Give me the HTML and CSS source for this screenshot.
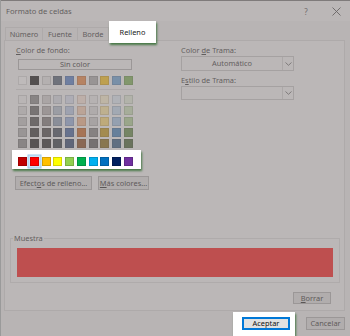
FILE: index.html
```html
<!DOCTYPE html>
<html lang="es">
<head>
<meta charset="utf-8">
<title>Formato de celdas</title>
<link rel="stylesheet" href="styles.css">
</head>
<body>
<div class="dialog">
  <header class="titlebar">
    <span class="title">Formato de celdas</span>
    <span class="help">?</span>
    <span class="close"><svg width="9" height="9" viewBox="0 0 9 9"><path d="M0.5 0.5L8.5 8.5M8.5 0.5L0.5 8.5" stroke="#333" stroke-width="0.9" fill="none"/></svg></span>
  </header>
  <div class="main">
    <nav class="tabs">
      <div class="tab t1">Número</div>
      <div class="tab t2">Fuente</div>
      <div class="tab t3">Borde</div>
      <div class="tab active hl">Relleno</div>
    </nav>
    <section class="panel">
      <div class="cols">
        <div class="left">
          <div class="label"><u>C</u>olor de fondo:</div>
          <button class="btn nocolor">Sin color</button>
          <div class="swrow theme">
            <span class="sw" style="background:#ffffff"></span>
            <span class="sw" style="background:#000000"></span>
            <span class="sw" style="background:#e7e6e6"></span>
            <span class="sw" style="background:#44546a"></span>
            <span class="sw" style="background:#4472c4"></span>
            <span class="sw" style="background:#ed7d31"></span>
            <span class="sw" style="background:#a5a5a5"></span>
            <span class="sw" style="background:#ffc000"></span>
            <span class="sw" style="background:#5b9bd5"></span>
            <span class="sw" style="background:#70ad47"></span>
          </div>
          <div class="sep"></div>
          <div class="grid">
            <div class="swrow">
              <span class="sw" style="background:#f2f2f2"></span>
              <span class="sw" style="background:#7f7f7f"></span>
              <span class="sw" style="background:#d0cece"></span>
              <span class="sw" style="background:#d6dce4"></span>
              <span class="sw" style="background:#d9e1f2"></span>
              <span class="sw" style="background:#fce4d6"></span>
              <span class="sw" style="background:#ededed"></span>
              <span class="sw" style="background:#fff2cc"></span>
              <span class="sw" style="background:#ddebf7"></span>
              <span class="sw" style="background:#e2efda"></span>
            </div>
            <div class="swrow">
              <span class="sw" style="background:#d9d9d9"></span>
              <span class="sw" style="background:#595959"></span>
              <span class="sw" style="background:#aeaaaa"></span>
              <span class="sw" style="background:#acb9ca"></span>
              <span class="sw" style="background:#b4c6e7"></span>
              <span class="sw" style="background:#f8cbad"></span>
              <span class="sw" style="background:#dbdbdb"></span>
              <span class="sw" style="background:#ffe699"></span>
              <span class="sw" style="background:#bdd7ee"></span>
              <span class="sw" style="background:#c6e0b4"></span>
            </div>
            <div class="swrow">
              <span class="sw" style="background:#bfbfbf"></span>
              <span class="sw" style="background:#404040"></span>
              <span class="sw" style="background:#757171"></span>
              <span class="sw" style="background:#8497b0"></span>
              <span class="sw" style="background:#8ea9db"></span>
              <span class="sw" style="background:#f4b084"></span>
              <span class="sw" style="background:#c9c9c9"></span>
              <span class="sw" style="background:#ffd966"></span>
              <span class="sw" style="background:#9bc2e6"></span>
              <span class="sw" style="background:#a9d08e"></span>
            </div>
            <div class="swrow">
              <span class="sw" style="background:#a6a6a6"></span>
              <span class="sw" style="background:#262626"></span>
              <span class="sw" style="background:#3a3838"></span>
              <span class="sw" style="background:#333f4f"></span>
              <span class="sw" style="background:#305496"></span>
              <span class="sw" style="background:#c65911"></span>
              <span class="sw" style="background:#7b7b7b"></span>
              <span class="sw" style="background:#bf8f00"></span>
              <span class="sw" style="background:#2f75b5"></span>
              <span class="sw" style="background:#548235"></span>
            </div>
            <div class="swrow">
              <span class="sw" style="background:#808080"></span>
              <span class="sw" style="background:#0d0d0d"></span>
              <span class="sw" style="background:#161616"></span>
              <span class="sw" style="background:#222b35"></span>
              <span class="sw" style="background:#203764"></span>
              <span class="sw" style="background:#833c0c"></span>
              <span class="sw" style="background:#525252"></span>
              <span class="sw" style="background:#806000"></span>
              <span class="sw" style="background:#1f4e78"></span>
              <span class="sw" style="background:#375623"></span>
            </div>
          </div>
          <div class="stdbox hl">
            <div class="swrow std">
              <span class="sw" style="background:#c00000"></span>
              <span class="sw selected" style="background:#ff0000"></span>
              <span class="sw" style="background:#ffc000"></span>
              <span class="sw" style="background:#ffff00"></span>
              <span class="sw" style="background:#92d050"></span>
              <span class="sw" style="background:#00b050"></span>
              <span class="sw" style="background:#00b0f0"></span>
              <span class="sw" style="background:#0070c0"></span>
              <span class="sw" style="background:#002060"></span>
              <span class="sw" style="background:#7030a0"></span>
            </div>
          </div>
          <div class="btnrow">
            <button class="btn effects">Efect<u>o</u>s de relleno...</button>
            <button class="btn more"><u>M</u>ás colores...</button>
          </div>
        </div>
        <div class="right">
          <div class="label">Color <u>d</u>e Trama:</div>
          <div class="select">
            <span class="value">Automático</span>
            <span class="arrow"><svg width="7" height="4" viewBox="0 0 7 4"><path d="M0.5 0.5L3.5 3.3L6.5 0.5" stroke="#444" stroke-width="0.8" fill="none"/></svg></span>
          </div>
          <div class="label">E<u>s</u>tilo de Trama:</div>
          <div class="select second">
            <span class="value"></span>
            <span class="arrow"><svg width="7" height="4" viewBox="0 0 7 4"><path d="M0.5 0.5L3.5 3.3L6.5 0.5" stroke="#444" stroke-width="0.8" fill="none"/></svg></span>
          </div>
        </div>
      </div>
      <fieldset class="sample">
        <legend>Muestra</legend>
        <div class="samplebar"></div>
      </fieldset>
      <div class="clearrow">
        <button class="btn clear"><u>B</u>orrar</button>
      </div>
    </section>
    <footer class="footer">
      <div class="okbox hl"><button class="btn ok">Aceptar</button></div>
      <button class="btn cancel">Cancelar</button>
    </footer>
  </div>
  <div class="dim"></div>
</div>
</body>
</html>
```

FILE: styles.css
```css
* { box-sizing: border-box; }

html, body {
  margin: 0;
  padding: 0;
  background: #f0f0f0;
}

body {
  font-family: "Noto Sans", "Open Sans", "DejaVu Sans", sans-serif;
  font-size: 7.4px;
  color: #111;
}

.dialog {
  position: relative;
  width: 350px;
  height: 336px;
  overflow: hidden;
  background: #f0f0f0;
  border-left: 1px solid #9a9a9a;
}

u { text-decoration: underline; text-underline-offset: 1px; }

/* title bar */
.titlebar {
  height: 21px;
  border-top: 1px solid #6a6a6a;
  background: #f8f8f8;
  display: flex;
  align-items: center;
  padding-left: 5px;
}
.title { flex: 1; font-size: 7.6px; color: #222; }
.help {
  width: 28px;
  margin-right: 2px;
  text-align: center;
  font-size: 8px;
  color: #444;
}
.close {
  width: 28px;
  display: flex;
  justify-content: center;
  align-items: center;
}

.main {
  padding: 0 5px 0 3px;
}

/* tabs */
.tabs {
  height: 19px;
  display: flex;
  align-items: flex-end;
  padding-left: 1px;
}
.tab {
  height: 13px;
  line-height: 12px;
  text-align: center;
  border: 1px solid #d9d9d9;
  border-bottom: none;
  background: #f0f0f0;
  color: #222;
  margin-right: -1px;
}
.t1 { width: 38px; }
.t2 { width: 36px; }
.t3 { width: 32px; }
.tab.active {
  width: 47px;
  height: 22px;
  line-height: 22px;
  margin-left: 1px;
  margin-bottom: -3px;
  background: #ffffff;
  border: none;
  color: #1a1a1a;
}

.hl {
  position: relative;
  z-index: 2;
  box-shadow: 1px 2px 2px rgba(24, 96, 24, 0.7);
}

/* panel */
.panel {
  height: 271px;
  border: 1px solid #d9d9d9;
  background: #f8f8f8;
  display: flex;
  flex-direction: column;
}

.cols {
  display: flex;
  padding-left: 7px;
}

.left {
  width: 137px;
  display: flex;
  flex-direction: column;
  align-items: flex-start;
}

.right {
  margin-left: 32px;
  width: 113px;
}

.label {
  height: 12px;
  line-height: 12px;
  margin-top: 3px;
  color: #222;
}
.left .label { padding-left: 4px; }

.btn {
  font-family: inherit;
  font-size: 7.4px;
  color: #111;
  background: #e1e1e1;
  border: 1px solid #adadad;
  padding: 0;
  margin: 0;
  text-align: center;
}

.nocolor {
  margin-top: 3px;
  margin-left: 6px;
  width: 114px;
  height: 11px;
  line-height: 9px;
  background: #f7f7f7;
}

.swrow {
  display: flex;
  gap: 2.78px;
}
.theme { margin-top: 6px; margin-left: 6px; }
.sw {
  width: 9px;
  height: 9px;
  border: 1px solid rgba(0, 0, 0, 0.16);
  display: block;
}
.sw.selected {
  box-shadow: 0 0 0 1.5px #cde6f7, 0 0 0 2.5px #9ccbee;
}

.sep {
  margin-top: 4px;
  margin-left: 4px;
  width: 119px;
  height: 1px;
  background: #d6d6d6;
}

.grid {
  margin-top: 5px;
  margin-left: 6px;
  display: flex;
  flex-direction: column;
  gap: 2px;
}

.stdbox {
  margin-top: 2px;
  width: 129px;
  height: 19px;
  padding: 7px 0 0 6px;
  background: #ffffff;
}

.btnrow {
  margin-top: 7px;
  margin-left: 3px;
  display: flex;
}
.effects { width: 77px; height: 14px; }
.more { width: 51px; height: 14px; margin-left: 6px; }

/* selects */
.select {
  height: 15px;
  display: flex;
  border: 1px solid #c4c4c4;
  background: #f7f7f7;
}
.select.second { height: 14px; }
.select .value {
  flex: 1;
  text-align: center;
  line-height: 13px;
  color: #222;
}
.select .arrow {
  width: 11px;
  border-left: 1px solid #d4d4d4;
  display: flex;
  align-items: center;
  justify-content: center;
}

/* sample */
.sample {
  margin: 42px 0 0 5px;
  width: 330px;
  border: 1px solid #dcdcdc;
  padding: 4px 6px 5px;
  min-width: 0;
}
.sample legend {
  padding: 0 1px;
  margin-left: -4px;
  line-height: 12px;
  color: #222;
}
.samplebar {
  height: 29px;
  background: #ff0000;
}

.clearrow {
  display: flex;
  justify-content: flex-end;
  padding-right: 13px;
  margin-top: 9px;
}
.clear { width: 38px; height: 12px; line-height: 10px; }

/* footer */
.footer {
  display: flex;
  justify-content: flex-end;
  align-items: flex-start;
  padding-right: 0;
}
.okbox {
  margin-top: 1px;
  width: 62px;
  height: 26px;
  padding: 5px 5px 0 9px;
  background: #ffffff;
}
.ok {
  width: 48px;
  height: 13px;
  line-height: 9px;
  border: 1px solid #0078d7;
  box-shadow: inset 0 0 0 1px #0078d7;
}
.cancel {
  margin-top: 6px;
  margin-left: 11px;
  width: 39px;
  height: 13px;
  line-height: 11px;
}

/* dim overlay covering the dialog */
.dim {
  position: absolute;
  inset: 0;
  z-index: 1;
  background: rgba(143, 136, 136, 0.58);
}
```
